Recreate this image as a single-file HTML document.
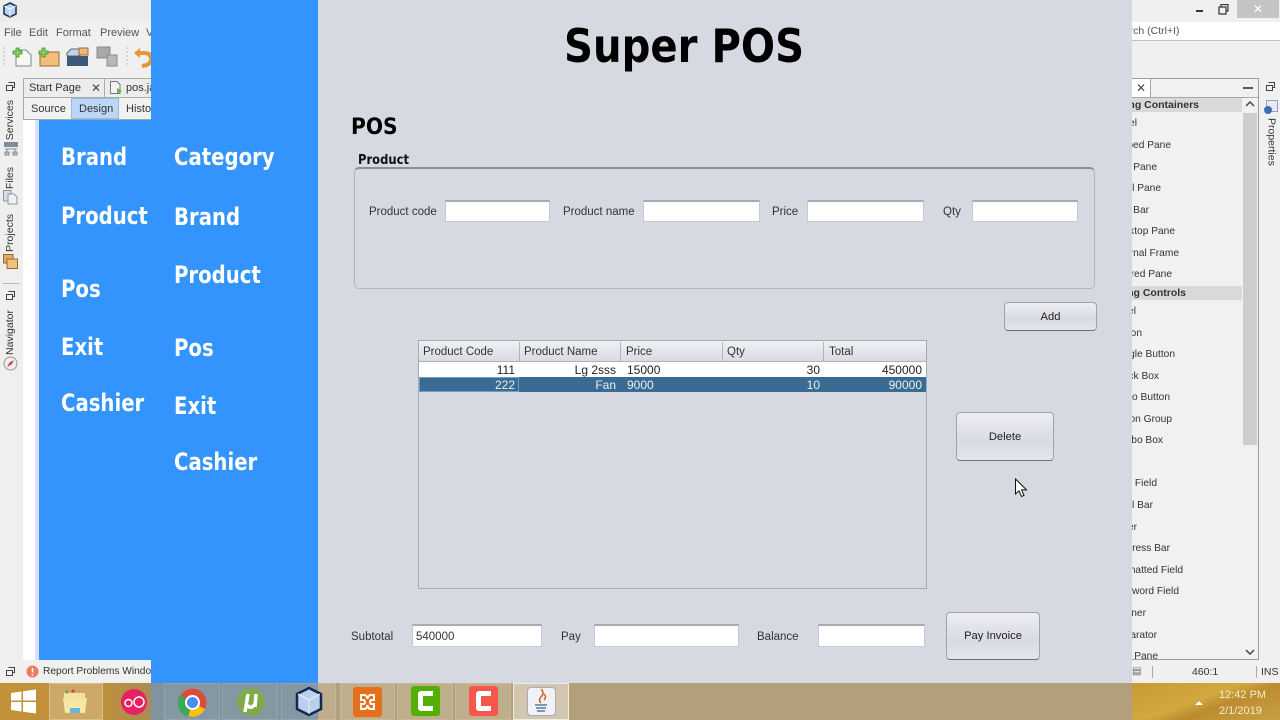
<!DOCTYPE html>
<html><head><meta charset="utf-8"><style>
html,body{margin:0;padding:0;width:1280px;height:720px;overflow:hidden;background:#d6d9e2}
body{position:relative;font-family:"Liberation Sans",sans-serif;color:#222}
.a{position:absolute}
.t{position:absolute;white-space:nowrap;line-height:1}
.n{font-size:24px;font-weight:bold;color:#fff;font-family:"DejaVu Sans",sans-serif;transform-origin:0 0;transform:scaleX(.82)}
.l{font-size:11.5px;color:#333}
.i{position:absolute;background:#fff;border:1px solid #c8cad1;border-top:2px solid #a9abb3;box-sizing:border-box}
.b{position:absolute;box-sizing:border-box;border:1px solid #a0a3ab;border-bottom:1.5px solid #6d7078;border-radius:4px;background:linear-gradient(#ededf2,#d9dbe3 60%,#e3e5ea);font-size:11.2px;color:#222;display:flex;align-items:center;justify-content:center}
.p{font-size:10.2px;color:#333}
.v{position:absolute;white-space:nowrap;font-size:10.5px;color:#333;line-height:1;writing-mode:vertical-rl}
.ts{position:absolute;height:37px;top:683px;box-sizing:border-box}
.bl{background:#8398a2;border:1px solid #92a5ae}
.be{background:#bfae8c;border:1px solid #c9b897}
.c{position:absolute;font-size:12px;line-height:15px;height:15px;white-space:nowrap}
.r{text-align:right}
</style></head><body>
<!-- left IDE -->
<div class="a" style="left:0;top:0;width:151px;height:683px;background:#f0f0f0"></div>
<div class="a" style="left:0;top:0;width:151px;height:22px;background:#ececec"></div>
<svg class="a" style="left:2px;top:2px" width="16" height="16" viewBox="0 0 16 16"><path d="M8 1L14 4V12L8 15L2 12V4Z" fill="#bcd3ee" stroke="#1d3558" stroke-width="1.6"/><path d="M2 4L8 7L14 4M8 7V15" fill="none" stroke="#fff" stroke-width=".8"/></svg>
<span class="t" style="left:4px;top:28px;font-size:11px;color:#555">File</span>
<span class="t" style="left:29px;top:28px;font-size:11px;color:#555">Edit</span>
<span class="t" style="left:56px;top:28px;font-size:11px;color:#555">Format</span>
<span class="t" style="left:100px;top:28px;font-size:11px;color:#555">Preview</span>
<span class="t" style="left:146px;top:28px;font-size:11px;color:#555">V</span>
<svg class="a" style="left:0;top:44px" width="151" height="26" viewBox="0 0 151 26">
<path d="M4 3V23M127 3V23" stroke="#bbb" stroke-dasharray="2 2"/>
<path d="M16 6H26L31 11V22H16Z" fill="#f7f7f3" stroke="#7f8a94"/><path d="M16 4H19V7H22V10H19V13H16V10H13V7H16Z" fill="#8ad15f" stroke="#3d8a2c" stroke-width=".8"/>
<path d="M40 8H59V22H40Z" fill="#f4bd7c" stroke="#9a6a33"/><path d="M42 4H45V7H48V10H45V13H42V10H39V7H42Z" fill="#8ad15f" stroke="#3d8a2c" stroke-width=".8"/>
<path d="M67 9L71 5H80V12H67Z" fill="#c4d4e4" stroke="#5b6d80"/><path d="M79 4H88V11H79Z" fill="#eebb77" stroke="#9a6a33"/><path d="M67 12H88V22H67Z" fill="#3f5a78"/>
<path d="M97 3H110V14H97Z" fill="#a8a8a8" stroke="#8a8a8a"/><path d="M107 11H117V22H107Z" fill="#b8b8b8" stroke="#8a8a8a"/>
<path d="M137 9H144Q151 9 151 15Q151 21 142 22" fill="none" stroke="#e09a3a" stroke-width="4"/><path d="M140 4L134 9L140 14Z" fill="#e09a3a"/>
</svg>
<div class="a" style="left:0;top:76px;width:23px;height:607px;background:#efefef"></div>
<svg class="a" style="left:5px;top:81px" width="11" height="11" viewBox="0 0 11 11"><path d="M3.500 1.500H9.500V6.500H7.500M1.500 4.500H7.500V9.500H1.500Z" fill="none" stroke="#444"/></svg>
<span class="v" style="left:5px;top:100px;transform:rotate(180deg)">Services</span>
<svg class="a" style="left:4px;top:142px" width="14" height="14" viewBox="0 0 14 14"><path d="M0 0H14V5H0Z" fill="#7f8c99"/><path d="M1 7H13M3 7V10M11 7V10M1 10H5V13H1ZM9 10H13V13H9Z" fill="#b9c2cb" stroke="#7f8c99"/></svg>
<span class="v" style="left:5px;top:167px;transform:rotate(180deg)">Files</span>
<svg class="a" style="left:3px;top:190px" width="15" height="15" viewBox="0 0 15 15"><path d="M.5.500H8V11H.5Z" fill="#d8dee6" stroke="#8a96a5"/><path d="M5 4H11L14 7V14H5Z" fill="#eef1f5" stroke="#8a96a5"/></svg>
<span class="v" style="left:5px;top:214px;transform:rotate(180deg)">Projects</span>
<svg class="a" style="left:3px;top:254px" width="15" height="15" viewBox="0 0 15 15"><path d="M.5.500H10V9H.5Z" fill="#e7a95b" stroke="#9a6a33"/><path d="M4 5H14.500V14.500H4Z" fill="#f0c07c" stroke="#9a6a33"/></svg>
<div class="a" style="left:3px;top:283px;width:17px;height:1px;background:#bbb"></div>
<svg class="a" style="left:5px;top:290px" width="11" height="11" viewBox="0 0 11 11"><path d="M3.500 1.500H9.500V6.500H7.500M1.500 4.500H7.500V9.500H1.500Z" fill="none" stroke="#444"/></svg>
<span class="v" style="left:5px;top:310px;transform:rotate(180deg)">Navigator</span>
<svg class="a" style="left:3px;top:356px" width="15" height="15" viewBox="0 0 15 15"><circle cx="7.500" cy="7.500" r="6.500" fill="#eee" stroke="#999"/><path d="M11 4L6.500 6.500L4 11L8.500 8.500Z" fill="#c44"/></svg>
<!-- tabs -->
<div class="a" style="left:23px;top:78px;width:128px;height:21px;background:#ececec;border-top:1px solid #aaa;border-left:1px solid #aaa;box-sizing:border-box"></div>
<div class="a" style="left:104px;top:78px;width:1px;height:21px;background:#aaa"></div>
<span class="t" style="left:29px;top:83px;font-size:11px;color:#333">Start Page</span>
<span class="t" style="left:91px;top:82px;font-size:12px;color:#444">✕</span>
<svg class="a" style="left:109px;top:80px" width="14" height="15" viewBox="0 0 14 15"><path d="M1.500 1.500H8L11 4.500V13.500H1.500Z" fill="#f4f4f4" stroke="#778"/><path d="M8 8L13 11L8 14Z" fill="#6ab04a"/></svg>
<span class="t" style="left:126px;top:83px;font-size:11px;color:#333">pos.ja</span>
<div class="a" style="left:23px;top:97px;width:128px;height:23px;background:#f1f1f1;border-top:1px solid #aaa;border-bottom:1px solid #9ea6b0;border-left:1px solid #aaa;box-sizing:border-box"></div>
<div class="a" style="left:71px;top:98px;width:48px;height:21px;background:#bcd7f5;border:1px solid #9cb8d8;box-sizing:border-box"></div>
<span class="t" style="left:31px;top:104px;font-size:11px;color:#333">Source</span>
<span class="t" style="left:79px;top:104px;font-size:11px;color:#333">Design</span>
<span class="t" style="left:126px;top:104px;font-size:11px;color:#333">Histor</span>
<div class="a" style="left:23px;top:120px;width:15px;height:540px;background:#fff"></div>
<div class="a" style="left:35px;top:120px;width:4px;height:540px;background:#dcdff5"></div>
<!-- blue -->
<div class="a" style="left:39px;top:120px;width:279px;height:563px;background:#3294fc"></div>
<div class="a" style="left:151px;top:0;width:167px;height:120px;background:#3294fc"></div>
<div class="a" style="left:0;top:660px;width:151px;height:23px;background:#f0f0f0"></div>
<svg class="a" style="left:5px;top:666px" width="11" height="11" viewBox="0 0 11 11"><path d="M3.500 1.500H9.500V6.500H7.500M1.500 4.500H7.500V9.500H1.500Z" fill="none" stroke="#444"/></svg>
<svg class="a" style="left:26px;top:665px" width="13" height="13" viewBox="0 0 13 13"><circle cx="6.500" cy="6.500" r="6" fill="#ef7a63"/><path d="M6.500 3V7.500M6.500 9V10.500" stroke="#fff" stroke-width="1.500"/></svg>
<div class="a" style="left:43px;top:660px;width:108px;height:23px;overflow:hidden"><span class="t" style="left:0;top:7px;font-size:10.200px;color:#333">Report Problems Window</span></div>
<span class="t n" style="left:61px;top:145px">Brand</span>
<span class="t n" style="left:61px;top:204px">Product</span>
<span class="t n" style="left:61px;top:277px">Pos</span>
<span class="t n" style="left:61px;top:335px">Exit</span>
<span class="t n" style="left:61px;top:391px">Cashier</span>
<span class="t n" style="left:174px;top:145px">Category</span>
<span class="t n" style="left:174px;top:205px">Brand</span>
<span class="t n" style="left:174px;top:263px">Product</span>
<span class="t n" style="left:174px;top:336px">Pos</span>
<span class="t n" style="left:174px;top:394px">Exit</span>
<span class="t n" style="left:174px;top:450px">Cashier</span>
<!-- main -->
<span class="t" style="left:564px;top:23px;font-size:46px;font-weight:bold;color:#000;font-family:'DejaVu Sans',sans-serif;transform-origin:0 0;transform:scaleX(.874)">Super POS</span>
<span class="t" style="left:351px;top:117px;font-size:22px;font-weight:bold;color:#000;font-family:'DejaVu Sans',sans-serif;transform-origin:0 0;transform:scaleX(.92)">POS</span>
<span class="t" style="left:358px;top:154px;font-size:13px;font-weight:bold;color:#111;font-family:'DejaVu Sans',sans-serif;transform-origin:0 0;transform:scaleX(.89)">Product</span>
<div class="a" style="left:354px;top:167px;width:741px;height:122px;box-sizing:border-box;border:1px solid #b4b6be;border-top:2px solid #8d8f97;border-radius:5px"></div>
<span class="t l" style="left:369px;top:207px">Product code</span>
<div class="i" style="left:445px;top:200px;width:105px;height:22px"></div>
<span class="t l" style="left:563px;top:207px">Product name</span>
<div class="i" style="left:643px;top:200px;width:117px;height:22px"></div>
<span class="t l" style="left:772px;top:207px">Price</span>
<div class="i" style="left:807px;top:200px;width:117px;height:22px"></div>
<span class="t l" style="left:943px;top:207px">Qty</span>
<div class="i" style="left:972px;top:200px;width:106px;height:22px"></div>
<div class="b" style="left:1004px;top:302px;width:93px;height:29px">Add</div>
<!-- table -->
<div class="a" style="left:418px;top:340px;width:509px;height:249px;background:#d6d9e2;border:1px solid #a8aab2;box-sizing:border-box"></div>
<div class="a" style="left:419px;top:341px;width:507px;height:21px;background:linear-gradient(#f0f1f4,#d9dbe2);border-bottom:1px solid #b0b2ba;box-sizing:border-box"></div>
<div class="a" style="left:519px;top:342px;width:1px;height:19px;background:#b4b6be"></div>
<div class="a" style="left:620px;top:342px;width:1px;height:19px;background:#b4b6be"></div>
<div class="a" style="left:722px;top:342px;width:1px;height:19px;background:#b4b6be"></div>
<div class="a" style="left:823px;top:342px;width:1px;height:19px;background:#b4b6be"></div>
<span class="t l" style="left:423px;top:347px">Product Code</span>
<span class="t l" style="left:524px;top:347px">Product Name</span>
<span class="t l" style="left:626px;top:347px">Price</span>
<span class="t l" style="left:727px;top:347px">Qty</span>
<span class="t l" style="left:829px;top:347px">Total</span>
<div class="a" style="left:419px;top:362px;width:507px;height:15px;background:#fff"></div>
<div class="a" style="left:419px;top:377px;width:507px;height:15px;background:#3a6b92"></div>
<div class="a" style="left:419px;top:377px;width:100px;height:15px;border:1px solid #6f9cc2;box-sizing:border-box"></div>
<span class="c r" style="left:419px;width:96px;top:363px;color:#222">111</span>
<span class="c r" style="left:520px;width:96px;top:363px;color:#222">Lg 2sss</span>
<span class="c" style="left:627px;top:363px;color:#222">15000</span>
<span class="c r" style="left:723px;width:97px;top:363px;color:#222">30</span>
<span class="c r" style="left:824px;width:98px;top:363px;color:#222">450000</span>
<span class="c r" style="left:419px;width:96px;top:378px;color:#e8eef4">222</span>
<span class="c r" style="left:520px;width:96px;top:378px;color:#e8eef4">Fan</span>
<span class="c" style="left:627px;top:378px;color:#e8eef4">9000</span>
<span class="c r" style="left:723px;width:97px;top:378px;color:#e8eef4">10</span>
<span class="c r" style="left:824px;width:98px;top:378px;color:#e8eef4">90000</span>
<div class="b" style="left:956px;top:412px;width:98px;height:49px">Delete</div>
<svg class="a" style="left:1014px;top:478px" width="15" height="20" viewBox="0 0 15 20"><path d="M1.500 1V16L5 12.800L7.500 18.500L10 17.400L7.600 11.900H12.500Z" fill="#fff" stroke="#111"/></svg>
<span class="t l" style="left:351px;top:632px">Subtotal</span>
<div class="i" style="left:412px;top:624px;width:130px;height:23px"></div>
<span class="t l" style="left:416px;top:632px">540000</span>
<span class="t l" style="left:561px;top:632px">Pay</span>
<div class="i" style="left:594px;top:624px;width:145px;height:23px"></div>
<span class="t l" style="left:757px;top:632px">Balance</span>
<div class="i" style="left:818px;top:624px;width:107px;height:23px"></div>
<div class="b" style="left:946px;top:612px;width:94px;height:48px">Pay Invoice</div>
<!-- right IDE -->
<div class="a" style="left:1132px;top:0;width:148px;height:683px;background:#f0f0f0"></div>
<div class="a" style="left:1237px;top:0;width:42px;height:18px;background:#c4c4c4"></div>
<span class="t" style="left:1253px;top:3px;font-size:12px;color:#fff">✕</span>
<div class="a" style="left:1196px;top:10px;width:7px;height:2px;background:#333"></div>
<svg class="a" style="left:1218px;top:4px" width="11" height="11" viewBox="0 0 11 11"><path d="M3 2.500V.5H10V7H8M1 3H8V10H1Z" fill="none" stroke="#333" stroke-width="1.200"/></svg>
<div class="a" style="left:1132px;top:22px;width:148px;height:19px;background:#fff;border-bottom:1px solid #b8c4d0;box-sizing:border-box"></div>
<div class="a" style="left:1132px;top:22px;width:148px;height:19px;overflow:hidden"><span class="t" style="left:-21px;top:4px;font-size:10.500px;color:#555">Search (Ctrl+I)</span></div>
<div class="a" style="left:1132px;top:78px;width:127px;height:582px;background:#f1f1f2;border:1px solid #9c9c9c;border-left:0;box-sizing:border-box"></div>
<div class="a" style="left:1132px;top:79px;width:18px;height:18px;background:#fff"></div>
<div class="a" style="left:1150px;top:79px;width:1px;height:18px;background:#aaa"></div>
<div class="a" style="left:1132px;top:97px;width:126px;height:1px;background:#a8a8a8"></div>
<span class="t" style="left:1136px;top:82px;font-size:12px;color:#444">✕</span>
<div class="a" style="left:1243px;top:87px;width:10px;height:2px;background:#555"></div>
<div class="a" style="left:1132px;top:98px;width:110px;height:14px;background:#d9d9d9"></div>
<div class="a" style="left:1132px;top:286px;width:110px;height:14px;background:#d9d9d9"></div>
<div class="a" style="left:1132px;top:1px;width:110px;height:658px;overflow:hidden">
<span class="t" style="right:43px;top:99px;font-size:10.500px;font-weight:bold;color:#333">Swing Containers</span>
<span class="t p" style="right:105px;top:118px">Label</span>
<span class="t p" style="right:71px;top:140px">Tabbed Pane</span>
<span class="t p" style="right:85px;top:162px">Split Pane</span>
<span class="t p" style="right:81px;top:183px">Scroll Pane</span>
<span class="t p" style="right:93px;top:205px">Tool Bar</span>
<span class="t p" style="right:67px;top:226px">Desktop Pane</span>
<span class="t p" style="right:63px;top:248px">Internal Frame</span>
<span class="t p" style="right:70px;top:269px">Layered Pane</span>
<span class="t" style="right:56px;top:287px;font-size:10.500px;font-weight:bold;color:#333">Swing Controls</span>
<span class="t p" style="right:106px;top:306px">Label</span>
<span class="t p" style="right:100px;top:328px">Button</span>
<span class="t p" style="right:67px;top:349px">Toggle Button</span>
<span class="t p" style="right:83px;top:371px">Check Box</span>
<span class="t p" style="right:72px;top:392px">Radio Button</span>
<span class="t p" style="right:70px;top:414px">Button Group</span>
<span class="t p" style="right:79px;top:435px">Combo Box</span>
<span class="t p" style="right:85px;top:478px">Text Field</span>
<span class="t p" style="right:89px;top:500px">Scroll Bar</span>
<span class="t p" style="right:105px;top:522px">Slider</span>
<span class="t p" style="right:72px;top:543px">Progress Bar</span>
<span class="t p" style="right:59px;top:565px">Formatted Field</span>
<span class="t p" style="right:63px;top:586px">Password Field</span>
<span class="t p" style="right:96px;top:608px">Spinner</span>
<span class="t p" style="right:85px;top:630px">Separator</span>
<span class="t p" style="right:84px;top:651px">Text Pane</span>
</div>
<div class="a" style="left:1243px;top:113px;width:14px;height:332px;background:#cdcdcd"></div>
<svg class="a" style="left:1245px;top:100px" width="10" height="8" viewBox="0 0 10 8"><path d="M1 6L5 2L9 6" fill="none" stroke="#444" stroke-width="1.500"/></svg>
<svg class="a" style="left:1245px;top:648px" width="10" height="8" viewBox="0 0 10 8"><path d="M1 2L5 6L9 2" fill="none" stroke="#444" stroke-width="1.500"/></svg>
<svg class="a" style="left:1265px;top:81px" width="11" height="11" viewBox="0 0 11 11"><path d="M3.500 1.500H9.500V6.500H7.500M1.500 4.500H7.500V9.500H1.500Z" fill="none" stroke="#444"/></svg>
<div class="a" style="left:1266px;top:100px;width:12px;height:12px;background:#e6ecf4;border:1px solid #8fa3bb;box-sizing:border-box"></div>
<div class="a" style="left:1264px;top:106px;width:8px;height:8px;border-radius:50%;background:#3f6db4"></div>
<span class="v" style="left:1266px;top:118px">Properties</span>
<span class="t" style="left:1132px;top:667px;font-size:10px;color:#666">▤</span>
<div class="a" style="left:1152px;top:666px;width:1px;height:12px;background:#aaa"></div>
<span class="t" style="left:1192px;top:667px;font-size:10.500px;color:#333">460:1</span>
<div class="a" style="left:1256px;top:666px;width:1px;height:12px;background:#aaa"></div>
<span class="t" style="left:1261px;top:667px;font-size:10.500px;color:#333">INS</span>
<!-- taskbar -->
<div class="a" style="left:0;top:683px;width:1280px;height:37px;background:#b39f7b"></div>
<div class="a" style="left:0;top:683px;width:151px;height:37px;background:linear-gradient(90deg,#c29238,#bd8f3c 70%,#a98c55)"></div>
<div class="a" style="left:151px;top:683px;width:167px;height:37px;background:#7f949f"></div>
<div class="a" style="left:1132px;top:683px;width:148px;height:37px;background:linear-gradient(160deg,#c79a35 0,#d2a83f 45%,#bb8c2e 60%,#c8a044 100%)"></div>
<svg class="a" style="left:11px;top:689px" width="25" height="25" viewBox="0 0 25 25"><path d="M0 4L10.500 2.500V11.500H0ZM12 2.300L25 .5V11.500H12ZM0 13H10.500V22.500L0 21ZM12 13H25V24.500L12 22.700Z" fill="#fff"/></svg>
<div class="ts" style="left:49px;width:54px;background:#cda866;border:1px solid #d9bf8b"></div>
<svg class="a" style="left:61px;top:689px" width="30" height="26" viewBox="0 0 30 26"><path d="M3 4H24V12H3Z" fill="#f5e39a"/><path d="M2 9H26L24 24H4Z" fill="#f7e7a6"/><path d="M9 19H19V24H9Z" fill="#6cb3df"/><circle cx="6" cy="3" r="1.500" fill="#5a5"/><circle cx="12" cy="2" r="1.500" fill="#c44"/></svg>
<svg class="a" style="left:120px;top:688px" width="28" height="28" viewBox="0 0 28 28"><circle cx="14" cy="14" r="13" fill="#e8205f"/><circle cx="8.500" cy="15" r="3.500" fill="none" stroke="#fff" stroke-width="1.500"/><circle cx="19" cy="14" r="5" fill="none" stroke="#fff" stroke-width="1.500"/></svg>
<div class="ts bl" style="left:164px;width:56px"></div>
<div class="ts bl" style="left:222px;width:56px"></div>
<div class="ts bl" style="left:281px;width:37px;border-right:0"></div>
<div class="ts be" style="left:318px;width:18px;border-left:0"></div>
<div class="ts be" style="left:340px;width:55px"></div>
<div class="ts be" style="left:397px;width:56px"></div>
<div class="ts be" style="left:455px;width:56px"></div>
<div class="ts" style="left:513px;width:56px;background:#d2c6b0;border:1px solid #efece4"></div>
<svg class="a" style="left:178px;top:688px" width="29" height="29" viewBox="0 0 29 29"><circle cx="14.500" cy="14.500" r="14" fill="#dd4b3e"/><path d="M14.500 14.500L27 21A14 14 0 0 1 10 28Z" fill="#f4c20d"/><path d="M14.500 14.500L10 28.500A14 14 0 0 1 2 7Z" fill="#3da755"/><circle cx="14.500" cy="14.500" r="6.500" fill="#4a8cf0" stroke="#fff" stroke-width="2"/></svg>
<svg class="a" style="left:236px;top:687px" width="30" height="30" viewBox="0 0 30 30"><circle cx="15" cy="15" r="14" fill="#7fa94a"/><path d="M12 7L9 25M11 18Q15 23 19 17M20 7L19 20" fill="none" stroke="#fff" stroke-width="3.500"/></svg>
<svg class="a" style="left:295px;top:686px" width="28" height="31" viewBox="0 0 28 31"><path d="M14 2L26 8V23L14 29L2 23V8Z" fill="#b9d0ee" stroke="#14284d" stroke-width="2.500"/><path d="M3 8L14 14L25 8M14 14V28" fill="none" stroke="#e8f0fa" stroke-width="1"/></svg>
<div class="a" style="left:353px;top:687px;width:29px;height:30px;border-radius:3px;background:#e66f1a"></div>
<svg class="a" style="left:353px;top:687px" width="29" height="30" viewBox="0 0 29 30"><path d="M8 8H11Q14 8 14.500 12Q15 8 18 8H21V13H18Q16 15 18 17H21V22H18Q15 22 14.500 18Q14 22 11 22H8V17H11Q13 15 11 13H8Z" fill="none" stroke="#fff" stroke-width="2"/></svg>
<div class="a" style="left:411px;top:686px;width:29px;height:30px;border-radius:3px;background:#54b000"></div>
<svg class="a" style="left:411px;top:686px" width="29" height="30" viewBox="0 0 29 30"><path d="M22 5H9L7 7V23L9 25H22V20H12V10H22Z" fill="#fff"/></svg>
<div class="a" style="left:469px;top:686px;width:29px;height:30px;border-radius:3px;background:#f5574a"></div>
<svg class="a" style="left:469px;top:686px" width="29" height="30" viewBox="0 0 29 30"><path d="M22 5H9L7 7V23L9 25H22V20H12V10H22Z" fill="#fff"/></svg>
<div class="a" style="left:527px;top:687px;width:29px;height:29px;border-radius:4px;background:#f0f2f6;border:1px solid #aab;box-sizing:border-box"></div>
<svg class="a" style="left:529px;top:688px" width="24" height="27" viewBox="0 0 24 27"><path d="M12 1Q16 5 12 9Q9 12 12 15M15 6Q18 9 15 12" fill="none" stroke="#d0632a" stroke-width="1.500"/><path d="M6 17H18M7 20H17M8 23H16" stroke="#5a7a9a" stroke-width="1.500"/></svg>
<svg class="a" style="left:1194px;top:700px" width="10" height="6" viewBox="0 0 10 6"><path d="M1 5L5 1L9 5Z" fill="#fff"/></svg>
<span class="t" style="left:1219px;top:690px;font-size:11px;color:#f5eccd">12:42 PM</span>
<span class="t" style="left:1219px;top:706px;font-size:11px;color:#f5eccd">2/1/2019</span>
</body></html>
